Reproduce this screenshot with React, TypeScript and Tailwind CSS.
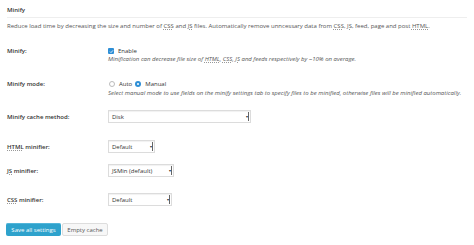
import React from 'react';

const Abbr = ({ children }: { children: React.ReactNode }) => (
  <span className="underline decoration-dotted decoration-[#999] underline-offset-1">{children}</span>
);

function Select({ value, width }: { value: string; width: string }) {
  return (
    <div className={`flex h-[13px] items-center justify-between border border-[#dcdcdc] bg-white pl-[3px] shadow-[inset_0_1px_1px_rgba(0,0,0,0.06)] ${width}`}>
      <span className="text-[6px] text-[#333]">{value}</span>
      <span className="mr-[1px] flex h-[9px] w-[4px] items-center justify-center border-r border-[#666] text-[4px] leading-none text-[#333]">▾</span>
    </div>
  );
}

function Row({ label, children, className = '' }: { label: React.ReactNode; children: React.ReactNode; className?: string }) {
  return (
    <div className={`flex items-center ${className}`}>
      <div className="w-[101px] shrink-0 font-semibold text-[#333]">{label}</div>
      {children}
    </div>
  );
}

export default function App() {
  return (
    <div className="h-[245px] w-[474px] bg-white px-[7px] text-[6px] leading-[8px] text-[#555]" style={{ fontFamily: '"Open Sans", "Liberation Sans", sans-serif' }}>
      <div className="border-b border-[#eee] pt-[6px] pb-[3px] font-semibold text-[#333]">Minify</div>
      <div className="mt-[4px] whitespace-nowrap">
        Reduce load time by decreasing the size and number of <Abbr>CSS</Abbr> and <Abbr>JS</Abbr> files. Automatically remove unncessary data from <Abbr>CSS</Abbr>, <Abbr>JS</Abbr>, feed, page and post <Abbr>HTML</Abbr>.
      </div>

      <div className="mt-[17px] flex items-start">
        <div className="w-[101px] shrink-0 font-semibold text-[#333]">Minify:</div>
        <div>
          <div className="flex items-center gap-[4px]">
            <span className="flex h-[6px] w-[6px] items-center justify-center rounded-[1px] bg-[#2e8fd6]">
              <svg viewBox="0 0 10 10" className="h-[5px] w-[5px]"><path d="M2 5.2l2 2 4-4.5" fill="none" stroke="#fff" strokeWidth="1.6" /></svg>
            </span>
            <span className="text-[#333]">Enable</span>
          </div>
          <div className="whitespace-nowrap italic">
            Minification can decrease file size of <Abbr>HTML</Abbr>, <Abbr>CSS</Abbr>, <Abbr>JS</Abbr> and feeds respectively by ~10% on average.
          </div>
        </div>
      </div>

      <div className="mt-[17px] flex items-start">
        <div className="w-[101px] shrink-0 font-semibold text-[#333]">Minify mode:</div>
        <div>
          <div className="flex items-center text-[#333]">
            <span className="ml-[1px] h-[6px] w-[6px] rounded-full border border-[#bbb] bg-white" />
            <span className="ml-[4px]">Auto</span>
            <span className="ml-[3px] flex h-[6px] w-[6px] items-center justify-center rounded-full bg-[#2e8fd6]">
              <span className="h-[2px] w-[2px] rounded-full bg-white" />
            </span>
            <span className="ml-[4px]">Manual</span>
          </div>
          <div className="mt-[1px] whitespace-nowrap italic">
            Select manual mode to use fields on the minify settings tab to specify files to be minified, otherwise files will be minified automatically.
          </div>
        </div>
      </div>

      <Row label="Minify cache method:" className="mt-[13px]">
        <Select value="Disk" width="w-[143px]" />
      </Row>
      <Row label={<><Abbr>HTML</Abbr> minifier:</>} className="mt-[17px]">
        <Select value="Default" width="w-[47px]" />
      </Row>
      <Row label={<><Abbr>JS</Abbr> minifier:</>} className="mt-[11px]">
        <Select value="JSMin (default)" width="w-[66px]" />
      </Row>
      <Row label={<><Abbr>CSS</Abbr> minifier:</>} className="mt-[16px]">
        <Select value="Default" width="w-[64px]" />
      </Row>

      <div className="-ml-[1px] mt-[17px] flex gap-[1px]">
        <button className="h-[13px] w-[55px] rounded-[2px] bg-[#2ea2cc] text-[6px] text-white shadow-[inset_0_1px_0_rgba(120,200,230,0.5)]">Save all settings</button>
        <button className="h-[13px] w-[46px] rounded-[2px] border border-[#ddd] bg-[#f7f7f7] text-[6px] text-[#555]">Empty cache</button>
      </div>
    </div>
  );
}
